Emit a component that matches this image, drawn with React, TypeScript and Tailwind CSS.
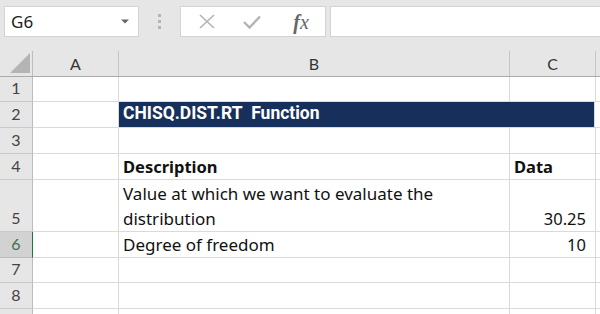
import React from "react";

const font = { fontFamily: "Lato, 'Noto Sans', sans-serif" };
const cellFont = { fontFamily: "'Noto Sans', Lato, sans-serif" };

type RowProps = {
  h: number;
  num: string;
  b?: React.ReactNode;
  c?: React.ReactNode;
  cLeft?: boolean;
  title?: boolean;
  selected?: boolean;
};

function Row({ h, num, b, c, cLeft, title, selected }: RowProps) {
  return (
    <div className="flex" style={{ height: h }}>
      <div
        className={
          "relative w-[33px] shrink-0 flex items-end justify-center border-b border-r text-[16px] leading-[24px] " +
          (selected
            ? "bg-[#d2d2d2] text-[#3f6f4f] border-b-[#bdbdbd] border-r-[#217346]"
            : "bg-[#e6e6e6] text-[#444444] border-b-[#c9c9c9] border-r-[#bdbdbd]")
        }
      >
        <span className="pb-[1px]">{num}</span>
      </div>
      <div className="w-[86px] shrink-0 border-b border-r border-[#dadada] bg-white" />
      {title ? (
        <>
          <div className="w-[391px] shrink-0 border-b border-[#dadada] bg-[#17305b] flex items-end pl-[4px]">
            <span
              className="text-white font-bold text-[17.5px] leading-[25px] pb-[1px]"
              style={{ fontFamily: "'Liberation Sans Narrow', 'Arial Narrow', Roboto, sans-serif" }}
            >
              CHISQ.DIST.RT&nbsp;&nbsp;Function
            </span>
          </div>
          <div className="w-[85px] shrink-0 border-b border-r border-[#dadada] bg-[#17305b]" />
        </>
      ) : (
        <>
          <div
            className="w-[391px] shrink-0 border-b border-r border-[#dadada] bg-white flex items-end pl-[4px] text-[17px] leading-[25px] text-[#111]"
            style={cellFont}
          >
            {b}
          </div>
          <div
            className={
              "w-[86px] shrink-0 border-b border-r border-[#dadada] bg-white flex items-end pl-[4px] pr-[9px] text-[16.5px] leading-[25px] text-[#111] " +
              (cLeft ? "justify-start" : "justify-end")
            }
            style={cellFont}
          >
            {c}
          </div>
        </>
      )}
      <div className="flex-1 border-b border-[#dadada] bg-white" />
    </div>
  );
}

export default function App() {
  return (
    <div className="w-[600px] h-[314px] overflow-hidden bg-white" style={font}>
      {/* formula bar */}
      <div className="h-[51px] bg-[#e6e6e6] flex items-start pt-[6px] pl-[4px]">
        <div className="w-[135px] h-[31px] bg-white border border-[#d4d4d4] flex items-center justify-between pl-[6px] pr-[9px]">
          <span className="text-[17px] text-[#222]" style={cellFont}>G6</span>
          <svg width="8" height="5" viewBox="0 0 8 5">
            <path d="M0 0.5 L8 0.5 L4 4.5 Z" fill="#666" />
          </svg>
        </div>
        <div className="w-[41px] h-[31px] flex flex-col items-center justify-center gap-[3px]">
          <div className="w-[3px] h-[3px] bg-[#b5b5b5]" />
          <div className="w-[3px] h-[3px] bg-[#b5b5b5]" />
          <div className="w-[3px] h-[3px] bg-[#b5b5b5]" />
        </div>
        <div className="w-[146px] h-[31px] bg-white border border-[#d4d4d4] flex items-center">
          <div className="w-[50px] flex justify-center pl-[2px]">
            <svg width="16" height="15" viewBox="0 0 16 15">
              <path d="M1 1 L15 14 M15 1 L1 14" stroke="#b3b3b3" strokeWidth="1.6" fill="none" />
            </svg>
          </div>
          <div className="w-[42px] flex justify-center">
            <svg width="18" height="14" viewBox="0 0 18 14">
              <path d="M1 7 L6.5 12.5 L17 1.5" stroke="#b3b3b3" strokeWidth="2.4" fill="none" />
            </svg>
          </div>
          <div className="w-[52px] flex justify-center pl-[4px]">
            <span
              className="italic text-[20px] text-[#666] leading-none"
              style={{ fontFamily: "'Liberation Serif', serif" }}
            >
              <span className="font-bold">f</span>x
            </span>
          </div>
        </div>
        <div className="ml-[4px] flex-1 h-[31px] bg-white border border-r-0 border-[#d4d4d4]" />
      </div>
      {/* column headers */}
      <div className="flex h-[26px] bg-[#e6e6e6] border-b border-[#ababab]">
        <div className="w-[33px] shrink-0 border-r border-[#bdbdbd] flex items-end justify-end pr-[2px] pb-[3px]">
          <svg width="20" height="20" viewBox="0 0 20 20">
            <path d="M20 0 L20 20 L0 20 Z" fill="#b4b4b4" />
          </svg>
        </div>
        <div className="w-[86px] shrink-0 border-r border-[#c6c6c6] flex items-end justify-center text-[16px] leading-[24px] text-[#333]">A</div>
        <div className="w-[391px] shrink-0 border-r border-[#c6c6c6] flex items-end justify-center text-[16px] leading-[24px] text-[#333]">B</div>
        <div className="w-[86px] shrink-0 border-r border-[#c6c6c6] flex items-end justify-center text-[16px] leading-[24px] text-[#333]">C</div>
        <div className="flex-1" />
      </div>
      <Row h={25} num="1" />
      <Row h={26} num="2" title />
      <Row h={26} num="3" />
      <Row h={26} num="4" b={<span className="font-bold text-[16.5px]">Description</span>} c={<span className="font-bold">Data</span>} cLeft />
      <Row
        h={52}
        num="5"
        b={
          <span>
            Value at which we want to evaluate the
            <br />
            distribution
          </span>
        }
        c="30.25"
      />
      <Row h={26} num="6" b="Degree of freedom" c="10" selected />
      <Row h={25} num="7" />
      <Row h={26} num="8" />
      <Row h={26} num="" />
    </div>
  );
}
